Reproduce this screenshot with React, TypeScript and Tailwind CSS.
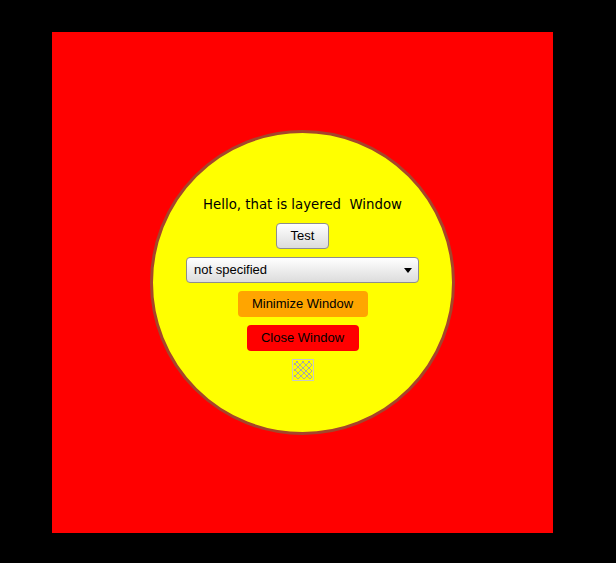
import React from "react";

function BrokenIcon() {
  return (
    <svg width="22" height="22" viewBox="0 0 22 22" className="block">
      <rect x="0.5" y="0.5" width="21" height="21" fill="none" stroke="#c8c8c8" strokeWidth="1" />
      <rect x="2" y="2" width="18" height="18" fill="#ffff00" />
      <g stroke="#a8a8a8" strokeWidth="1" fill="none">
        <path d="M2 6 L6 2 M2 12 L12 2 M2 18 L18 2 M6 20 L20 6 M12 20 L20 12 M18 20 L20 18" />
        <path d="M2 4 L18 20 M2 10 L12 20 M2 16 L6 20 M4 2 L20 18 M10 2 L20 12 M16 2 L20 6" />
      </g>
    </svg>
  );
}

export default function App() {
  const sans = { fontFamily: '"Liberation Sans", Arial, sans-serif' };
  return (
    <div className="w-[616px] h-[563px] bg-black pl-[52px] pt-[32px]">
      <div className="w-[501px] h-[501px] bg-[#ff0000] flex items-center justify-center">
        <div className="w-[305px] h-[305px] rounded-full bg-[#ffff00] border-[3px] border-[#a4452c] flex flex-col items-center pt-[64px]">
          <div
            className="text-[13.3px] leading-[16px] text-black"
            style={{ fontFamily: '"DejaVu Sans", Verdana, sans-serif', whiteSpace: "pre" }}
          >
            {"Hello, that is layered  Window"}
          </div>
          <div
            className="mt-[10px] w-[53px] h-[26px] flex items-center justify-center rounded-[4px] border border-[#8e8e8e] bg-gradient-to-b from-white to-[#dcdcdc] text-[13px] text-black"
            style={sans}
          >
            Test
          </div>
          <div
            className="mt-[8px] w-[233px] h-[26px] flex items-center justify-between rounded-[4px] border border-[#8e8e8e] bg-gradient-to-b from-white to-[#dcdcdc] pl-[7px] pr-[6px] text-[13px] text-black"
            style={sans}
          >
            <span>not specified</span>
            <svg width="8" height="5" viewBox="0 0 8 5" className="block">
              <path d="M0 0 L8 0 L4 5 Z" fill="#000" />
            </svg>
          </div>
          <div
            className="mt-[8px] w-[130px] h-[26px] flex items-center justify-center rounded-[4px] bg-[#ffa500] text-[13px] text-black"
            style={sans}
          >
            Minimize Window
          </div>
          <div
            className="mt-[8px] w-[112px] h-[26px] flex items-center justify-center rounded-[4px] bg-[#ff0000] text-[13px] text-black"
            style={sans}
          >
            Close Window
          </div>
          <div className="mt-[8px]">
            <BrokenIcon />
          </div>
        </div>
      </div>
    </div>
  );
}
